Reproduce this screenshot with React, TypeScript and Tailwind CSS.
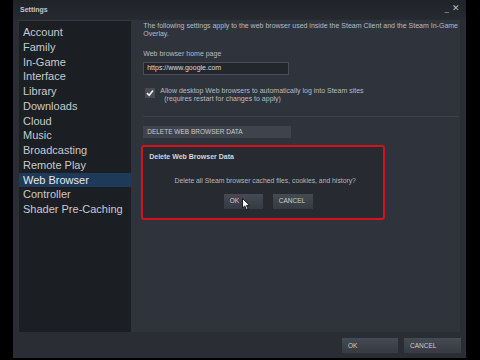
import React from "react";

const items = [
  "Account",
  "Family",
  "In-Game",
  "Interface",
  "Library",
  "Downloads",
  "Cloud",
  "Music",
  "Broadcasting",
  "Remote Play",
  "Web Browser",
  "Controller",
  "Shader Pre-Caching",
];

function Btn({ label, className }: { label: string; className: string }) {
  return (
    <div
      className={
        "flex items-center px-[6px] text-[6.5px] text-[#c9ccd0] bg-gradient-to-b from-[#454a53] to-[#363a42] " +
        className
      }
    >
      {label}
    </div>
  );
}

export default function App() {
  return (
    <div
      className="w-[480px] h-[360px] bg-black flex overflow-hidden"
      style={{ fontFamily: '"Liberation Sans", Arial, sans-serif' }}
    >
      <div className="ml-[13px] w-[453px] h-[358px] bg-[#2a2d34] flex flex-col">
        {/* title bar */}
        <div className="h-[20px] flex items-center justify-between pl-[7px] pr-[6px] bg-gradient-to-b from-[#1f2227] to-[#272b31]">
          <span className="text-[7px] font-bold text-[#c3c6ca]">Settings</span>
          <div className="flex items-end gap-[3px] text-[#b9bcc0] -mt-[4px]">
            <span className="text-[8px] leading-none">_</span>
            <span className="text-[9px] leading-none">✕</span>
          </div>
        </div>
        {/* body */}
        <div className="flex px-[6px] h-[312px]">
          <div className="w-[113px] bg-[#1b1e23] pt-[4px] border-t border-[#33373e]">
            {items.map((it) => (
              <div
                key={it}
                className={
                  "h-[14.75px] flex items-center pl-[4px] text-[11px] " +
                  (it === "Web Browser" ? "bg-[#1e3a58] text-[#e6e8ea]" : "text-[#c8cacd]")
                }
              >
                {it}
              </div>
            ))}
          </div>
          <div className="flex-1 bg-[#2f333b] pl-[12px] pr-[2px] pt-[2px] text-[7px] text-[#b7bbc0]">
            <p className="leading-[8px]">
              <span className="whitespace-nowrap">
                The following settings apply to the web browser used inside the Steam Client and the Steam In-Game
              </span>
              <br />
              Overlay.
            </p>
            <div className="mt-[12px] leading-[8px]">Web browser home page</div>
            <div className="mt-[4px] w-[146px] h-[13px] bg-[#23262c] border border-[#4a4e56] flex items-center pl-[3px] text-[#d9dbde]">
              https://www.google.com
            </div>
            <div className="mt-[12px] flex items-start">
              <div className="ml-[2px] mt-[1px] w-[10px] h-[10px] bg-[#474b53] flex items-center justify-center">
                <svg width="8" height="8" viewBox="0 0 8 8">
                  <path d="M1 4.2 L3.2 6.3 L7 1.6" stroke="#eef0f2" strokeWidth="1.6" fill="none" />
                </svg>
              </div>
              <div className="ml-[5px] leading-[8px]">
                <div>Allow desktop Web browsers to automatically log into Steam sites</div>
                <div className="pl-[4px]">(requires restart for changes to apply)</div>
              </div>
            </div>
            <div className="mt-[13px] h-px bg-[#3c4048]" />
            <div className="mt-[9px] w-[148px] h-[12px] bg-[#3f434b] flex items-center pl-[4px] text-[6.5px] text-[#c9ccd0]">
              DELETE WEB BROWSER DATA
            </div>
            {/* dialog */}
            <div className="mt-[7px] -ml-[2px] w-[244px] h-[75px] border-2 border-[#d5121b] rounded-[3px] bg-[#272a31] flex flex-col">
              <div className="pl-[6px] pt-[5px] text-[7px] font-bold text-[#d3d6d9]">Delete Web Browser Data</div>
              <div className="mt-[13px] text-center pl-[4px] text-[6.8px] text-[#b4b8bd]">
                Delete all Steam browser cached files, cookies, and history?
              </div>
              <div className="mt-[8px] flex justify-center gap-[10px] pl-[10px] relative">
                <Btn label="OK" className="w-[39px] h-[15px] from-[#4a4f58]" />
                <Btn label="CANCEL" className="w-[40px] h-[15px]" />
                <svg
                  className="absolute left-[99px] top-[4px]"
                  width="9"
                  height="13"
                  viewBox="0 0 9 13"
                >
                  <path d="M0.5 0.5 L0.5 10 L2.8 7.9 L4.5 11.8 L6 11.1 L4.4 7.4 L7.6 7.4 Z" fill="#ffffff" stroke="#000" strokeWidth="0.8" />
                </svg>
              </div>
            </div>
          </div>
        </div>
        {/* footer */}
        <div className="flex-1 flex justify-end items-start pt-[6px] pr-[5px] gap-[6px]">
          <Btn label="OK" className="w-[56px] h-[15px]" />
          <Btn label="CANCEL" className="w-[57px] h-[15px]" />
        </div>
      </div>
    </div>
  );
}
